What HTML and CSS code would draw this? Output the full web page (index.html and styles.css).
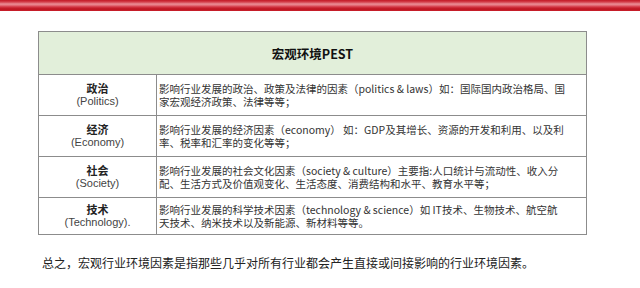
FILE: index.html
```html
<!DOCTYPE html>
<html lang="zh-CN">
<head>
<meta charset="utf-8">
<title>宏观环境PEST</title>
<link rel="stylesheet" href="styles.css">
</head>
<body>
<div class="topbar"></div>
<table class="pest">
  <colgroup>
    <col class="col-factor">
    <col class="col-desc">
  </colgroup>
  <tr>
    <th class="head" colspan="2">宏观环境PEST</th>
  </tr>
  <tr>
    <td class="factor"><b>政治</b><span>(Politics)</span></td>
    <td class="desc">影响行业发展的政治、政策及法律的因素（politics &amp; laws）如：国际国内政治格局、国<br>家宏观经济政策、法律等等；</td>
  </tr>
  <tr>
    <td class="factor"><b>经济</b><span>(Economy)</span></td>
    <td class="desc">影响行业发展的经济因素（economy） 如：GDP及其增长、资源的开发和利用、以及利<br>率、税率和汇率的变化等等；</td>
  </tr>
  <tr>
    <td class="factor"><b>社会</b><span>(Society)</span></td>
    <td class="desc">影响行业发展的社会文化因素（society &amp; culture）主要指:人口统计与流动性、收入分<br>配、生活方式及价值观变化、生活态度、消费结构和水平、教育水平等；</td>
  </tr>
  <tr>
    <td class="factor last"><b>技术</b><span>(Technology).</span></td>
    <td class="desc last">影响行业发展的科学技术因素（technology &amp; science）如 IT技术、生物技术、航空航<br>天技术、纳米技术以及新能源、新材料等等。</td>
  </tr>
</table>
<p class="summary">总之，宏观行业环境因素是指那些几乎对所有行业都会产生直接或间接影响的行业环境因素。</p>
</body>
</html>
```
FILE: styles.css
```css
html, body {
  margin: 0;
  padding: 0;
  background: #ffffff;
}
body {
  width: 640px;
  height: 288px;
  overflow: hidden;
  font-family: "Noto Sans CJK SC", "Liberation Sans", sans-serif;
  color: #222;
}
.topbar {
  height: 11px;
  background: linear-gradient(to bottom, #c21825 0px, #d4404c 2px, #e98d95 4px, #e77a84 5px, #d23442 7px, #bd1420 9px, #c8202c 11px);
}
.pest {
  margin: 20px 0 0 38px;
  width: 548px;
  border-collapse: collapse;
  table-layout: fixed;
}
.col-factor {
  width: 118px;
}
.col-desc {
  width: 430px;
}
.pest th, .pest td {
  border: 1px solid #8c8c8c;
  padding: 0;
}
.head {
  height: 42px;
  background: #e2efda;
  font-size: 12.5px;
  font-weight: bold;
  text-align: center;
  vertical-align: middle;
  color: #111;
}
.factor {
  height: 40px;
  text-align: center;
  vertical-align: middle;
  font-size: 11px;
  line-height: 13px;
}
.factor b {
  display: block;
  font-weight: bold;
  color: #222;
}
.factor span {
  display: block;
  font-family: "Liberation Sans", sans-serif;
  color: #444;
}
.pest .desc {
  font-size: 10.5px;
  line-height: 13px;
  padding-left: 2px;
  white-space: nowrap;
  overflow: hidden;
  vertical-align: middle;
  color: #333;
}
.pest .last {
  height: 36px;
}
.summary {
  margin: 20px 0 0 42px;
  font-size: 12px;
  line-height: 16px;
  color: #222;
  white-space: nowrap;
}
```
